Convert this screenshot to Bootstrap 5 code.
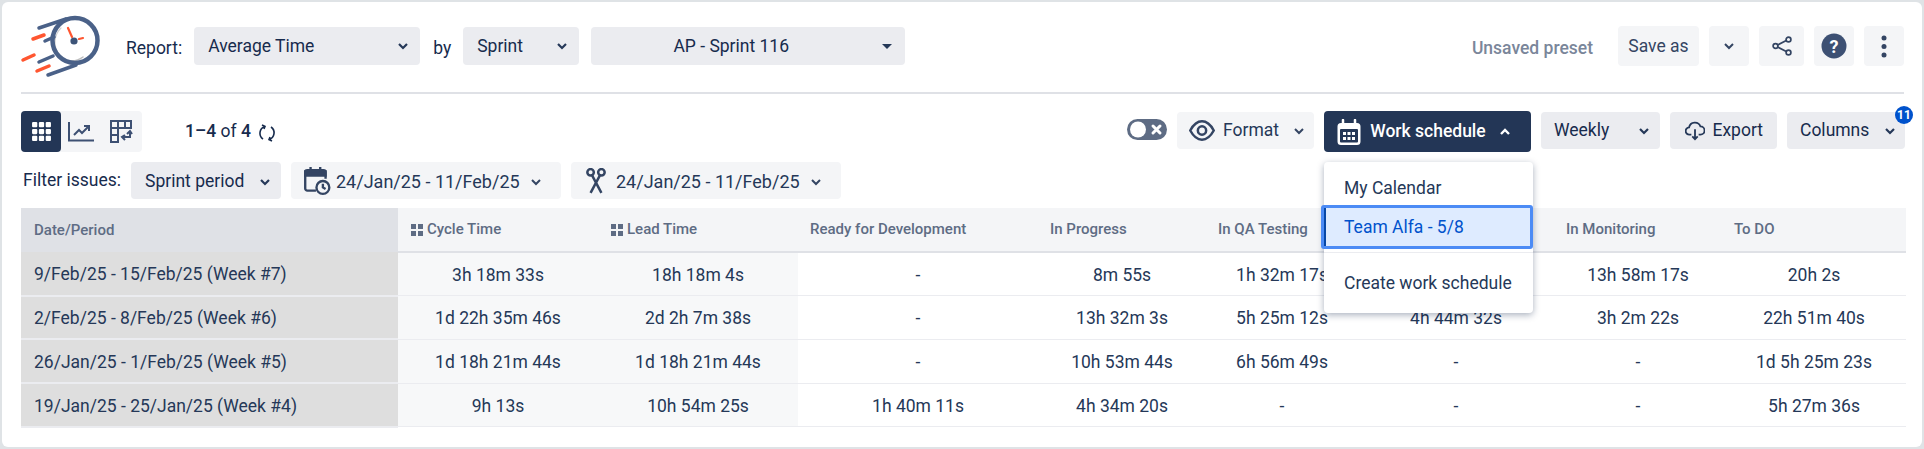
<!DOCTYPE html>
<html lang="en">
<head>
  <meta charset="UTF-8">
  <title>Average Time Report</title>
  <link href="https://cdn.jsdelivr.net/npm/bootstrap@5.3.0/dist/css/bootstrap.min.css" rel="stylesheet">
  <style>
    html, body { height: 100%; }
    body { font-family: Roboto, "Liberation Sans", sans-serif; background: #dfe3e6; color: #253858; font-size: 17.5px; overflow: hidden; }
    .frame { background: #fff; margin: 2px; height: 445px; border-radius: 6px; padding: 13px 16px 0 19px; }
    .top-row { height: 79px; border-bottom: 2px solid #dfe1e6; padding-top: 12px; margin-right: 2px; align-items: flex-start; }
    .logo { width: 84px; height: 66px; margin: -13px 0 0 -3px; flex: none; }
    .lbl { color: #172b4d; }
    .mid-lbl { margin-top: 8px; }
    .tb { border: 0; border-radius: 4px; background: #f4f5f7; color: #253858; font-size: 17.5px; display: inline-flex; align-items: center; padding: 0 11px 0 14px; white-space: nowrap; justify-content: space-between; flex: none; }
    .tb.gr { background: #ebecf0; color: #172b4d; }
    .chev { width: 12px; height: 8px; flex: none; }
    .sel38 { height: 38px; }
    .btn40 { height: 40px; margin-top: -1px; }
    .report-sel { width: 226px; margin-left: 12px; }
    .by-lbl { margin: 8px 12px 0 13px; }
    .sprint-sel { width: 116px; }
    .ap-sel { width: 314px; margin-left: 12px; padding-right: 12px; }
    .ap-txt { flex-grow: 1; text-align: center; padding-right: 24px; }
    .unsaved { color: #7a869a; font-weight: 500; margin: 8px 25px 0 auto; }
    .top-tools { display: flex; gap: 10px; }
    .saveas { width: 81px; justify-content: center; padding: 0; color: #344563; }
    .sq { width: 40px; justify-content: center; padding: 0; }
    .sq.wide { width: 45px; }
    .second-row { height: 41px; margin-top: 17px; margin-right: 1px; }
    .view-grp { width: 121px; height: 41px; background: #f4f5f7; border-radius: 4px; }
    .view-btn { width: 40px; height: 41px; display: flex; align-items: center; justify-content: center; border-radius: 4px; }
    .view-btn.on { background: #233656; }
    .pager { margin-left: 43px; color: #172b4d; }
    .pager b { font-weight: 500; }
    .pager svg { margin-left: 3px; }
    .mid-tools { display: flex; align-items: flex-start; gap: 10px; margin-left: auto; height: 41px; }
    .switch-ic { margin-top: 8px; }
    .mid-tools .tb { height: 37px; margin-top: 1px; }
    .fmt-btn { width: 137px; padding: 0 9px 0 12px; }
    .fmt-btn span { margin-right: 6px; }
    .mid-tools .work-btn { background: #233656; color: #fff; height: 41px; width: 207px; margin-top: 0; font-weight: 500; padding: 0 20px 0 13px; }
    .work-btn span { margin-right: 4px; }
    .sched-menu { display: block; top: 51px; left: 0; width: 209px; height: 151px; padding: 0; border: 0; border-radius: 4px; box-shadow: 0 2px 7px rgba(9, 30, 66, .35); margin: 0; font-size: 17.5px; --bs-dropdown-min-width: 0; }
    .sched-menu .dropdown-item { color: #253858; padding: 0 20px; height: 44px; display: flex; align-items: center; }
    .sched-menu .first-it { height: 43px; padding-top: 9px; }
    .sched-menu .dropdown-item.active { background: #deebff; color: #0052cc; border: 3px solid #4c8bf5; border-radius: 3px; width: 212px; margin-left: -3px; position: relative; }
    .sched-menu .dropdown-item.active::before { content: ""; position: absolute; left: 0; top: 0; bottom: 0; width: 2px; background: #0747a6; }
    .sched-menu .dropdown-divider { margin: 3px 0 0; border-color: #ebecf0; opacity: 1; }
    .sched-menu .last-it { margin-top: 8px; }
    .weekly-btn { width: 119px; padding: 0 10px 0 13px; }
    .export-btn { width: 107px; padding: 0 14px 0 15px; }
    .columns-btn { width: 118px; padding: 0 9px 0 13px; position: relative; }
    .cnt-badge { top: -6px; right: -8px; width: 18px; height: 18px; border-radius: 50%; background: #0052cc; color: #fff; font-size: 12px; font-weight: 700; display: flex; align-items: center; justify-content: center; }
    .third-row { height: 37px; margin-top: 10px; gap: 10px; }
    .third-row .tb { height: 37px; padding-top: 2px; }
    .filter-lbl { margin: 0 0 0 2px; width: 98px; white-space: nowrap; }
    .period-sel { width: 150px; padding: 0 10px 0 14px; }
    .date-btn { width: 270px; padding: 0 19px 0 12px; font-size: 18px; justify-content: flex-start; }
    .date-btn .date-txt { white-space: nowrap; }
    .date-btn .chev { margin-left: auto; }
    .date-btn svg:first-child { margin-right: 5px; margin-top: -2px; }
    .date-btn.cut-btn { padding-left: 15px; }
    .cut-btn svg:first-child { margin-right: 10px; }
    .rep-wrap { margin-top: 9px; width: 1885px; }
    .rep-table { table-layout: fixed; width: 1885px; margin: 0; font-size: 17.5px; color: #253858; --bs-table-bg: transparent; }
    .rep-table th, .rep-table td { padding: 0 12px; vertical-align: middle; white-space: nowrap; }
    .rep-table th { height: 44px; background: #f4f5f7; color: #5e6c84; font-size: 15px; font-weight: 500; border-bottom: 2px solid #dfe1e6; }
    .rep-table th:first-child { background: #dfe1e6; border-bottom: 0; padding-left: 13px; }
    .rep-table td { height: 43.7px; padding-top: 2px; text-align: center; border-bottom: 1px solid #ebecf0; }
    .rep-table td:first-child { background: #dedede; text-align: left; padding-left: 13px; border-bottom: 2px solid #ebecf0; }
    .rep-table td:nth-child(2), .rep-table td:nth-child(3) { background: #f7f8f9; }
    .rep-table th.grip-th { padding-left: 13px; }
    .c1 { width: 377px; } .c2, .c3 { width: 200px; } .c4 { width: 240px; } .c5 { width: 168px; } .c6 { width: 152px; } .c7 { width: 196px; } .c8 { width: 168px; } .c9 { width: 184px; }
    .grip { display: inline-grid; grid-template-columns: 5px 5px; gap: 2px; margin-right: 4px; vertical-align: middle; }
    .grip i { width: 5px; height: 5px; background: #5e6c84; display: block; }
  </style>
</head>
<body>
  <div class="frame">
    <div class="d-flex top-row">
      <svg class="logo" viewBox="18 14 84 66" fill="none" stroke-linecap="round">
        <path d="M58 55a19 19 0 0 0 25 2" stroke="#bdbdbd" stroke-width="1.500"/>
        <path d="M59 54a19.500 19.500 0 0 1 2-26" stroke="#d0d0d0" stroke-width="1.200"/>
        <circle cx="75" cy="40.500" r="22.500" stroke="#4a6188" stroke-width="4.500"/>
        <path d="M39 28 66 19M45 41 54 37M39 62 53 56M48 75 76 65" stroke="#4a6188" stroke-width="3.500"/>
        <path d="M33 39 44 35M23 60 34 55M37 71 49 66" stroke="#ff5630" stroke-width="3.500"/>
        <path d="M68 28 72 37M79 39 83 38" stroke="#ff5630" stroke-width="2.200"/>
        <circle cx="74" cy="41" r="3.600" fill="#3d5478"/>
      </svg>
      <span class="lbl ms-4 mid-lbl">Report:</span>
      <button class="tb gr report-sel sel38" type="button">Average Time <svg class="chev" viewBox="0 0 12 8"><path d="M2 2l4 4 4-4" fill="none" stroke="#253858" stroke-width="2.200"/></svg></button>
      <span class="lbl by-lbl">by</span>
      <button class="tb gr sprint-sel sel38" type="button">Sprint <svg class="chev" viewBox="0 0 12 8"><path d="M2 2l4 4 4-4" fill="none" stroke="#253858" stroke-width="2.200"/></svg></button>
      <button class="tb gr ap-sel sel38" type="button"><span class="ap-txt">AP - Sprint 116</span><svg class="chev" viewBox="0 0 12 8"><path d="M1 2h10L6 7z" fill="#253858"/></svg></button>
      <span class="unsaved">Unsaved preset</span>
      <div class="top-tools">
        <button class="tb btn40 saveas" type="button">Save as</button>
        <button class="tb btn40 sq" type="button"><svg class="chev" viewBox="0 0 12 8"><path d="M2 2l4 4 4-4" fill="none" stroke="#344563" stroke-width="2"/></svg></button>
        <button class="tb btn40 sq wide" type="button"><svg width="20" height="20" viewBox="0 0 20 20" fill="none" stroke="#344563" stroke-width="1.700"><circle cx="16.500" cy="3.500" r="2.400"/><circle cx="16.500" cy="16.500" r="2.400"/><circle cx="3.500" cy="10" r="2.400"/><path d="M5.700 8.900 14.300 4.600M5.700 11.100 14.300 15.400"/></svg></button>
        <button class="tb btn40 sq" type="button"><svg width="26" height="26" viewBox="0 0 26 26"><circle cx="13" cy="13" r="12.500" fill="#3d5073"/><text x="13" y="19.500" text-anchor="middle" font-family="Roboto" font-weight="700" font-size="18" fill="#fff">?</text></svg></button>
        <button class="tb btn40 sq" type="button"><svg width="6" height="23" viewBox="0 0 6 23" fill="#344563"><circle cx="3" cy="3" r="2.500"/><circle cx="3" cy="11.500" r="2.500"/><circle cx="3" cy="20" r="2.500"/></svg></button>
      </div>
    </div>

    <div class="d-flex align-items-center second-row">
      <div class="d-flex view-grp">
        <div class="view-btn on"><svg width="21" height="21" viewBox="0 0 20 20" fill="#fff"><rect x="1" y="1" width="5" height="5" rx="1"/><rect x="7.500" y="1" width="5" height="5" rx="1"/><rect x="14" y="1" width="5" height="5" rx="1"/><rect x="1" y="7.500" width="5" height="5" rx="1"/><rect x="7.500" y="7.500" width="5" height="5" rx="1"/><rect x="14" y="7.500" width="5" height="5" rx="1"/><rect x="1" y="14" width="5" height="5" rx="1"/><rect x="7.500" y="14" width="5" height="5" rx="1"/><rect x="14" y="14" width="5" height="5" rx="1"/></svg></div>
        <div class="view-btn"><svg width="26" height="20" viewBox="0 0 26 20" fill="none" stroke="#3d5073" stroke-width="2"><path d="M1 0v18.500h25M6 13l5-5 3 3 6-6M16 4h5v5"/></svg></div>
        <div class="view-btn"><svg width="24" height="23" viewBox="0 0 24 23" fill="none" stroke="#3d5073" stroke-width="2"><path d="M2 1h20v7H2zM2 8v14h7V1M2 15h7M16 1v7M21 12v5h-7M16 20l-3-3 3-2M18 14l3-3 2 3"/></svg></div>
      </div>
      <span class="pager"><b>1–4</b> of <b>4</b> <svg width="18" height="20" viewBox="0 0 18 20" fill="none" stroke="#172b4d" stroke-width="1.600"><path d="M7 3.500A7 7 0 0 0 5 16M11 16.500A7 7 0 0 0 13 4M4 2l3 1.500L6 6M14 18l-3-1.500L12 14"/></svg></span>
      <div class="mid-tools">
        <svg class="switch-ic" width="40" height="21" viewBox="0 0 40 21"><rect width="40" height="21" rx="10.500" fill="#5e6c84"/><circle cx="11" cy="10.500" r="8" fill="#fff"/><path d="M26 7l7 7M33 7l-7 7" stroke="#fff" stroke-width="3" stroke-linecap="round"/></svg>
        <button class="tb fmt-btn" type="button"><svg width="26" height="21" viewBox="0 0 25 20" fill="none" stroke="#344563" stroke-width="2.400"><path d="M1.200 10C5 3 9 1.200 12.500 1.200S20 3 23.800 10C20 17 16 18.800 12.500 18.800S5 17 1.200 10z"/><circle cx="12.500" cy="10" r="4"/></svg><span>Format</span><svg class="chev" viewBox="0 0 12 8"><path d="M2 2l4 4 4-4" fill="none" stroke="#344563" stroke-width="2"/></svg></button>
        <div class="position-relative">
          <button class="tb work-btn" type="button"><svg width="24" height="26" viewBox="0 0 24 26"><path d="M4 4h16a3.500 3.500 0 0 1 3.500 3.500v15A3.500 3.500 0 0 1 20 26H4a3.500 3.500 0 0 1-3.500-3.500v-15A3.500 3.500 0 0 1 4 4z" fill="#fff"/><path d="M6 1v5M18 1v5" stroke="#fff" stroke-width="2.500" stroke-linecap="round"/><rect x="3" y="10" width="18" height="13.500" rx="1" fill="#233656"/><g fill="#fff"><rect x="6" y="13" width="3" height="3"/><rect x="10.500" y="13" width="3" height="3"/><rect x="15" y="13" width="3" height="3"/><rect x="6" y="18" width="3" height="3"/><rect x="10.500" y="18" width="3" height="3"/><rect x="15" y="18" width="3" height="3"/></g></svg><span>Work schedule</span><svg class="chev" viewBox="0 0 12 8"><path d="M2 6l4-4 4 4" fill="none" stroke="#fff" stroke-width="2.400"/></svg></button>
          <div class="dropdown-menu sched-menu">
            <a class="dropdown-item first-it" href="#">My Calendar</a>
            <a class="dropdown-item active" href="#">Team Alfa - 5/8</a>
            <hr class="dropdown-divider">
            <a class="dropdown-item last-it" href="#">Create work schedule</a>
          </div>
        </div>
        <button class="tb gr weekly-btn" type="button">Weekly <svg class="chev" viewBox="0 0 12 8"><path d="M2 2l4 4 4-4" fill="none" stroke="#253858" stroke-width="2.200"/></svg></button>
        <button class="tb gr export-btn" type="button"><svg width="20" height="20" viewBox="0 0 22 22" fill="none" stroke="#253858" stroke-width="2"><path d="M7 15H5a4 4 0 0 1-.5-8A6.500 6.500 0 0 1 17 6a4.500 4.500 0 0 1 0 9h-2M11 9v11M8 17l3 3 3-3"/></svg>Export</button>
        <button class="tb gr columns-btn" type="button">Columns <svg class="chev" viewBox="0 0 12 8"><path d="M2 2l4 4 4-4" fill="none" stroke="#253858" stroke-width="2.200"/></svg><span class="position-absolute cnt-badge">11</span></button>
      </div>
    </div>

    <div class="d-flex align-items-center third-row">
      <span class="lbl filter-lbl">Filter issues:</span>
      <button class="tb gr period-sel" type="button">Sprint period <svg class="chev" viewBox="0 0 12 8"><path d="M2 2l4 4 4-4" fill="none" stroke="#253858" stroke-width="2.200"/></svg></button>
      <button class="tb date-btn" type="button"><svg width="28" height="30" viewBox="0 0 26 28" fill="none" stroke="#344563" stroke-width="2.200"><path d="M12 23H4a2 2 0 0 1-2-2V6a2 2 0 0 1 2-2h15a2 2 0 0 1 2 2v6"/><path d="M2 5h19v4H2z" fill="#344563"/><path d="M7 1v4M16 1v4"/><circle cx="18.500" cy="20" r="6"/><path d="M18.500 16.500V20l2.500 1.500"/></svg><span class="date-txt">24/Jan/25 - 11/Feb/25</span><svg class="chev" viewBox="0 0 12 8"><path d="M2 2l4 4 4-4" fill="none" stroke="#344563" stroke-width="2"/></svg></button>
      <button class="tb date-btn cut-btn" type="button"><svg width="20" height="26" viewBox="0 0 18 24" fill="none" stroke="#344563" stroke-width="2.300"><circle cx="4" cy="4" r="3"/><circle cx="14" cy="4" r="3"/><path d="M5.500 7 14 23M12.500 7 4 23"/></svg><span class="date-txt">24/Jan/25 - 11/Feb/25</span><svg class="chev" viewBox="0 0 12 8"><path d="M2 2l4 4 4-4" fill="none" stroke="#344563" stroke-width="2"/></svg></button>
    </div>

    <div class="rep-wrap">
      <table class="table rep-table">
        <colgroup><col class="c1"><col class="c2"><col class="c3"><col class="c4"><col class="c5"><col class="c6"><col class="c7"><col class="c8"><col class="c9"></colgroup>
        <thead>
          <tr><th>Date/Period</th><th class="grip-th"><span class="grip"><i></i><i></i><i></i><i></i></span>Cycle Time</th><th class="grip-th"><span class="grip"><i></i><i></i><i></i><i></i></span>Lead Time</th><th>Ready for Development</th><th>In Progress</th><th>In QA Testing</th><th></th><th>In Monitoring</th><th>To DO</th></tr>
        </thead>
        <tbody>
          <tr><td>9/Feb/25 - 15/Feb/25 (Week #7)</td><td>3h 18m 33s</td><td>18h 18m 4s</td><td>-</td><td>8m 55s</td><td>1h 32m 17s</td><td></td><td>13h 58m 17s</td><td>20h 2s</td></tr>
          <tr><td>2/Feb/25 - 8/Feb/25 (Week #6)</td><td>1d 22h 35m 46s</td><td>2d 2h 7m 38s</td><td>-</td><td>13h 32m 3s</td><td>5h 25m 12s</td><td>4h 44m 32s</td><td>3h 2m 22s</td><td>22h 51m 40s</td></tr>
          <tr><td>26/Jan/25 - 1/Feb/25 (Week #5)</td><td>1d 18h 21m 44s</td><td>1d 18h 21m 44s</td><td>-</td><td>10h 53m 44s</td><td>6h 56m 49s</td><td>-</td><td>-</td><td>1d 5h 25m 23s</td></tr>
          <tr><td>19/Jan/25 - 25/Jan/25 (Week #4)</td><td>9h 13s</td><td>10h 54m 25s</td><td>1h 40m 11s</td><td>4h 34m 20s</td><td>-</td><td>-</td><td>-</td><td>5h 27m 36s</td></tr>
        </tbody>
      </table>
    </div>
  </div>
  <script src="https://cdn.jsdelivr.net/npm/bootstrap@5.3.0/dist/js/bootstrap.bundle.min.js"></script>
</body>
</html>
